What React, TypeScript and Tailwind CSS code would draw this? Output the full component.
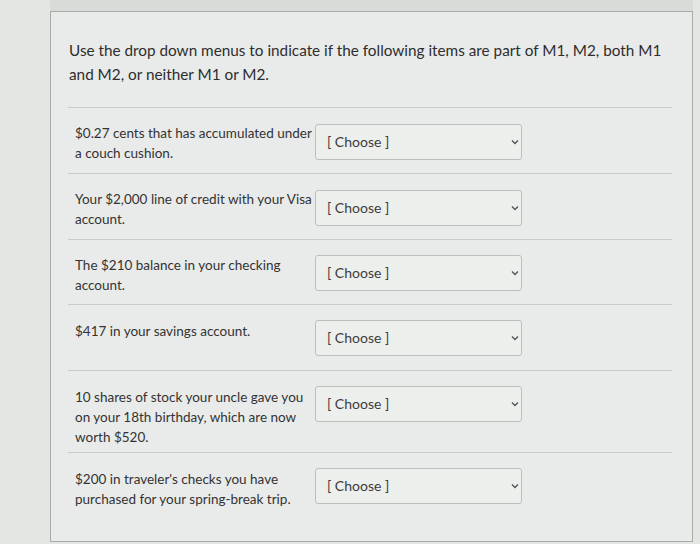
const items = [
  { text: '$0.27 cents that has accumulated under a couch cushion.', h: 'h-[66px]', pt: 'pt-[15px]', st: 'mt-[1px]' },
  { text: 'Your $2,000 line of credit with your Visa account.', h: 'h-[66px]', pt: 'pt-[15px]', st: 'mt-[1px]' },
  { text: 'The $210 balance in your checking account.', h: 'h-[65px]', pt: 'pt-[15px]', st: 'mt-0' },
  { text: '$417 in your savings account.', h: 'h-[66px]', pt: 'pt-[16px]', st: '-mt-px' },
  { text: '10 shares of stock your uncle gave you on your 18th birthday, which are now worth $520.', h: 'h-[82px]', pt: 'pt-[16px]', st: '-mt-px' },
  { text: "$200 in traveler's checks you have purchased for your spring-break trip.", h: 'h-[89px]', pt: 'pt-[16px]', st: '-mt-px' },
];

function Select({ className }: { className: string }) {
  return (
    <div
      className={`${className} w-[207px] h-[36px] flex items-center justify-between pl-[11px] pr-[1px] pb-[2px] border border-[#bdbfbd] rounded-[3px] bg-[#edefed]`}
    >
      <span className="text-[14px] text-[#3c3c3c]">[ Choose ]</span>
      <svg width="10" height="10" viewBox="0 0 10 10" className="text-[#555] mt-[2px]">
        <path d="M2 3.5 L5 6.5 L8 3.5" fill="none" stroke="currentColor" strokeWidth="1.4" />
      </svg>
    </div>
  );
}

export default function App() {
  return (
    <div className="w-[700px] h-[544px] overflow-hidden bg-[#e4e6e4] font-['Lato',sans-serif] text-[#2e2e2e]">
      <div className="h-[11px] ml-[50px] w-[643px] bg-[#d9dbd9]"></div>
      <div className="ml-[50px] w-[643px] h-[531px] border border-[#a9aba9] bg-[#e9ebea]">
        <p className="pt-[26px] pl-[18px] pr-[20px] text-[15.3px] leading-[24px]">
          Use the drop down menus to indicate if the following items are part of M1, M2, both M1 and M2, or neither M1 or M2.
        </p>
        <div className="mt-[21px] ml-[17px] mr-[20px]">
          {items.map((it, i) => (
            <div
              key={i}
              className={`${it.h} ${it.pt} flex items-start border-t border-[#c9cbc9]`}
            >
              <p className="w-[247px] pl-[7px] pr-[2px] text-[13.5px] leading-[20px] text-[#333]">{it.text}</p>
              <Select className={it.st} />
            </div>
          ))}
        </div>
      </div>
    </div>
  );
}
